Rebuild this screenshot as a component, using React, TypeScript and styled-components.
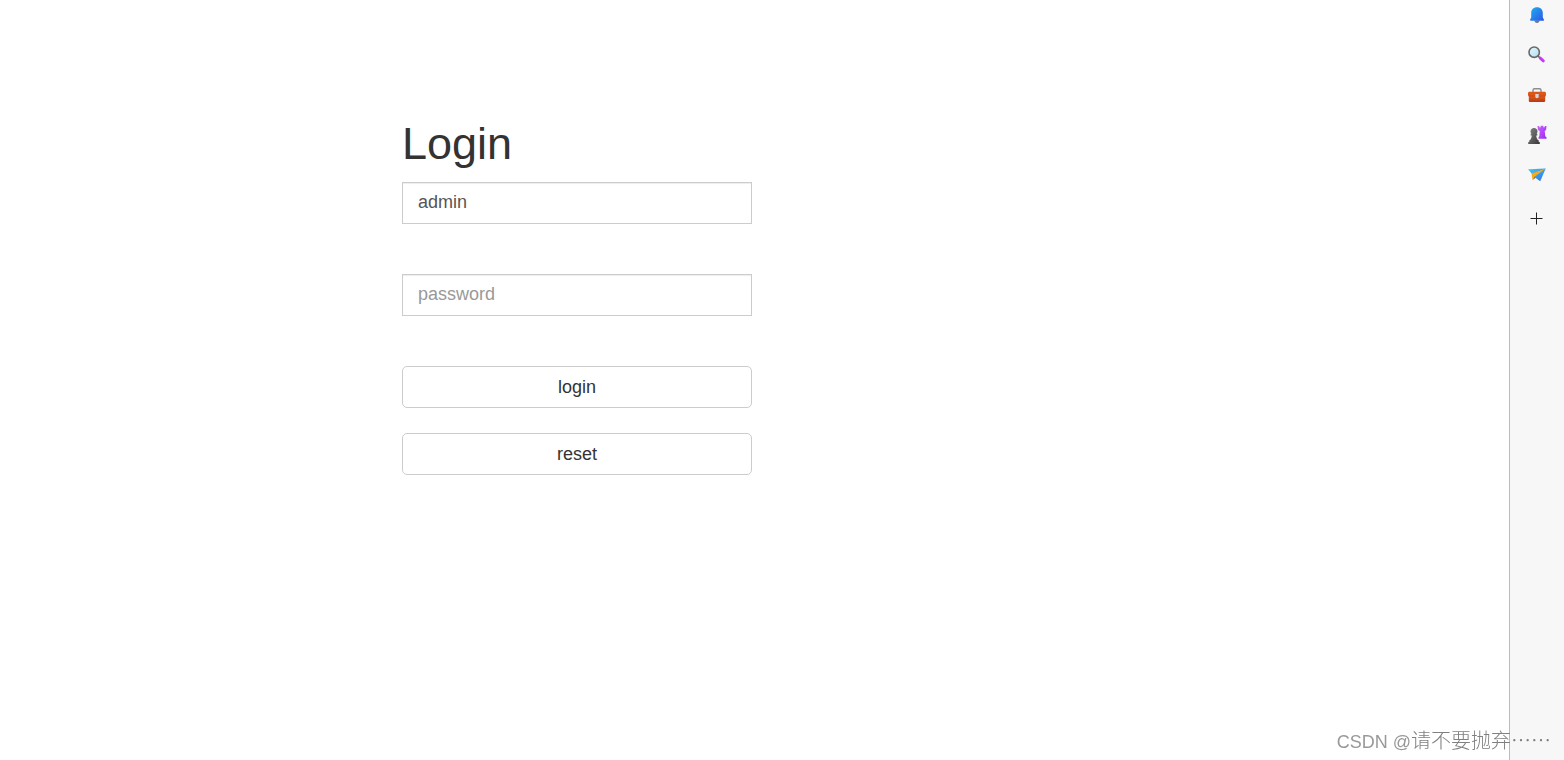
import React from "react";
import styled, { createGlobalStyle } from "styled-components";

const GlobalStyle = createGlobalStyle`
  *, *::before, *::after { box-sizing: border-box; }
  body {
    margin: 0;
    background: #fff;
    color: #333;
    font-family: "Liberation Sans", Arial, sans-serif;
    font-size: 18px;
    line-height: 25px;
  }
`;

const Page = styled.div`
  display: flex;
  min-height: 100vh;
`;

const Main = styled.main`
  flex: 1;
  padding: 119px 25px 25px calc(25% + 11px);
`;

const LoginForm = styled.form`
  display: flex;
  flex-direction: column;
  max-width: 350px;
`;

const Title = styled.h1`
  margin: 0 0 13px;
  font-size: 45px;
  font-weight: 400;
  line-height: 50px;
`;

const Field = styled.input`
  width: 100%;
  height: 42px;
  margin: 0 0 50px;
  padding: 6px 15px 8px;
  border: 1px solid #ccc;
  border-radius: 0;
  background: #fff;
  box-shadow: inset 0 1px 1px rgba(0, 0, 0, 0.075);
  color: #555;
  font: inherit;
  outline: none;

  &::placeholder {
    color: #999;
    opacity: 1;
  }
`;

const FormButton = styled.button`
  width: 100%;
  height: 42px;
  margin: 0 0 25px;
  padding: 7px 15px;
  border: 1px solid #ccc;
  border-radius: 5px;
  background: #fff;
  color: #333;
  font: inherit;
  cursor: pointer;
`;

const Sidebar = styled.aside`
  display: flex;
  flex-direction: column;
  align-items: center;
  gap: 20px;
  flex: 0 0 55px;
  padding-top: 5px;
  border-left: 1px solid #bbb;
  background: #f7f7f7;
`;

const ToolButton = styled.button<{ $spaced?: boolean }>`
  display: block;
  width: 20px;
  height: 20px;
  margin-top: ${(p) => (p.$spaced ? "3px" : "0")};
  padding: 0;
  border: 0;
  background: none;
  cursor: pointer;

  svg { display: block; }
`;

const Watermark = styled.div`
  position: fixed;
  right: 13px;
  bottom: 5px;
  color: #808080;
  font-family: "Noto Sans CJK SC", sans-serif;
  font-size: 20px;
  font-weight: 300;
  line-height: 30px;
  white-space: nowrap;
`;

const WatermarkSite = styled.span`
  color: #999;
  font-family: "Liberation Sans", Arial, sans-serif;
  font-size: 18px;
  line-height: 18px;
`;

const Bell = () => (
  <svg width="20" height="20" viewBox="0 0 20 20" aria-hidden="true">
    <defs>
      <linearGradient id="bell" x1="0" y1="0" x2="1" y2="1">
        <stop offset="0" stopColor="#1fb0f0" />
        <stop offset="1" stopColor="#2b55e6" />
      </linearGradient>
    </defs>
    <path d="M7.500 15.500h5c0 1.500-1 2.500-2.500 2.500s-2.500-1-2.500-2.500z" fill="#777" />
    <path d="M10 2.200c-3.600 0-5.800 2.400-5.800 5.800v4.500L3 14.800c-.2.500.1.900.6.900h12.800c.5 0 .8-.4.600-.9l-1.200-2.300V8c0-3.400-2.200-5.800-5.800-5.800z" fill="url(#bell)" />
  </svg>
);

const Search = () => (
  <svg width="20" height="20" viewBox="0 0 20 20" aria-hidden="true">
    <defs>
      <linearGradient id="lens" x1="0" y1="0" x2="1" y2="1">
        <stop offset="0" stopColor="#e4f7fd" />
        <stop offset="1" stopColor="#b3dcf0" />
      </linearGradient>
    </defs>
    <path d="M11 11.200l2.300 2" stroke="#666" strokeWidth="1.600" />
    <path d="M13.300 13.200l3 2.600" stroke="#c43df5" strokeWidth="3" strokeLinecap="round" />
    <circle cx="7.200" cy="7.200" r="5.200" fill="url(#lens)" stroke="#686868" strokeWidth="1.600" />
  </svg>
);

const Toolbox = () => (
  <svg width="20" height="20" viewBox="0 0 20 20" aria-hidden="true">
    <defs>
      <linearGradient id="box" x1="0" y1="0" x2="0" y2="1">
        <stop offset="0" stopColor="#ef6a22" />
        <stop offset="1" stopColor="#b93610" />
      </linearGradient>
    </defs>
    <path d="M6 7.500V5.200c0-.9.600-1.500 1.500-1.500h5c.9 0 1.500.6 1.500 1.500v2.300" fill="none" stroke="#8c8c8c" strokeWidth="1.400" />
    <path d="M1.800 9h16.400v6.400c0 .9-.6 1.600-1.500 1.600H3.300c-.9 0-1.500-.7-1.500-1.600z" fill="url(#box)" />
    <path d="M2.500 6.700h15c.9 0 1.500.6 1.500 1.500v2.600H1V8.200c0-.9.600-1.500 1.500-1.500z" fill="#dc5519" />
    <path d="M1.500 11h17" stroke="#b33c10" strokeWidth=".6" />
    <path d="M8.300 9h3.400v2.500c0 1.100-.7 1.700-1.700 1.700s-1.700-.6-1.700-1.700z" fill="#d4d4d4" />
  </svg>
);

const Chess = () => (
  <svg width="20" height="20" viewBox="0 0 20 20" aria-hidden="true">
    <defs>
      <linearGradient id="pawn" x1="0" y1="0" x2="1" y2="1">
        <stop offset="0" stopColor="#858585" />
        <stop offset="1" stopColor="#383838" />
      </linearGradient>
      <linearGradient id="rook" x1="0" y1="0" x2="1" y2="1">
        <stop offset="0" stopColor="#cb63ff" />
        <stop offset="1" stopColor="#982cf2" />
      </linearGradient>
    </defs>
    <path d="M10.500 1h1.800v1.300h1.400V.8h2.600v1.500h1.400V1h1.800l-.4 4-1.400 1 .6 5.300 1.200 1v1.500h-8v-1.500l.8-1 .4-5.300-1.800-1z" fill="url(#rook)" />
    <path d="M7 3c2 0 3.500 1.500 3.500 3.400 0 1-.4 1.800-1 2.400h.8v1.700H9.200c.2 2 .7 3.400 1.700 4.500h.7v1.500l1.200.8V19H1.200v-1.700l1.200-.8V15h.7c1-1.100 1.500-2.500 1.700-4.500H3.700V8.800h.8c-.6-.6-1-1.400-1-2.400C3.500 4.500 5 3 7 3z" fill="url(#pawn)" />
  </svg>
);

const PaperPlane = () => (
  <svg width="20" height="20" viewBox="0 0 20 20" aria-hidden="true">
    <defs>
      <linearGradient id="wing" x1="0" y1="0" x2="1" y2="1">
        <stop offset="0" stopColor="#48cbea" />
        <stop offset="1" stopColor="#286ff1" />
      </linearGradient>
    </defs>
    <path d="M1 4.200L18.700 3.500 13.200 16.200 8 12.500 5 9z" fill="url(#wing)" />
    <path d="M18.700 3.500L4.500 8.500l1 6.500 2.400-3.500z" fill="#f6aa20" />
    <path d="M7.800 11.500L5.500 15l2.800-2z" fill="#865523" />
  </svg>
);

const Plus = () => (
  <svg width="20" height="20" viewBox="0 0 20 20" aria-hidden="true">
    <path d="M9.500 4.500v12M3.500 10.500h12" stroke="#222" strokeWidth="1" />
  </svg>
);

export default function App() {
  return (
    <>
      <GlobalStyle />
      <Page>
        <Main>
          <LoginForm onSubmit={(e) => e.preventDefault()}>
            <Title>Login</Title>
            <Field type="text" name="username" aria-label="username" defaultValue="admin" />
            <Field type="password" name="password" aria-label="password" placeholder="password" />
            <FormButton type="submit">login</FormButton>
            <FormButton type="reset">reset</FormButton>
          </LoginForm>
        </Main>
        <Sidebar>
          <ToolButton type="button" aria-label="Notifications"><Bell /></ToolButton>
          <ToolButton type="button" aria-label="Search"><Search /></ToolButton>
          <ToolButton type="button" aria-label="Tools"><Toolbox /></ToolButton>
          <ToolButton type="button" aria-label="Games"><Chess /></ToolButton>
          <ToolButton type="button" aria-label="Send"><PaperPlane /></ToolButton>
          <ToolButton type="button" aria-label="Add" $spaced><Plus /></ToolButton>
        </Sidebar>
      </Page>
      <Watermark><WatermarkSite>CSDN @</WatermarkSite>请不要抛弃……</Watermark>
    </>
  );
}
